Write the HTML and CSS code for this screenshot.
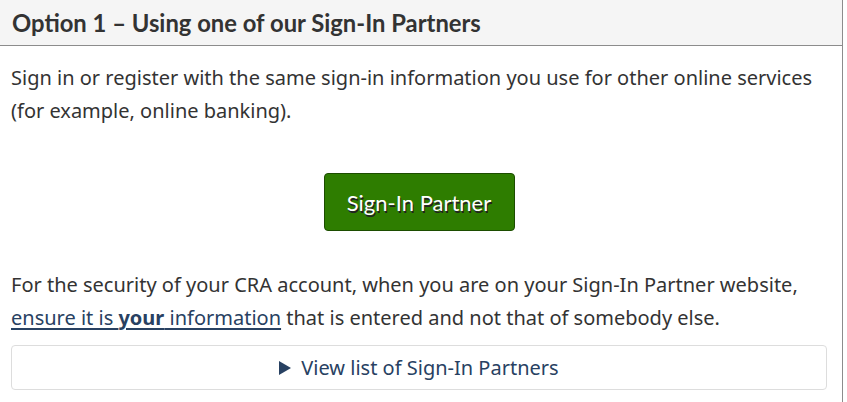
FILE: index.html
```html
<!DOCTYPE html>
<html lang="en">
<head>
<meta charset="utf-8">
<title>Option 1</title>
<link rel="stylesheet" href="styles.css">
</head>
<body>
<section class="panel">
  <header class="panel-heading">
    <h3 class="panel-title">Option 1 – Using one of our Sign-In Partners</h3>
  </header>
  <div class="panel-body">
    <p class="intro">Sign in or register with the same sign-in information you use for other online services (for example, online banking).</p>
    <div class="btn-row">
      <a class="btn-cta" href="#">Sign-In Partner</a>
    </div>
    <p class="note">For the security of your CRA account, when you are on your Sign-In Partner website, <a class="link" href="#">ensure it is <strong>your</strong> information</a> that is entered and not that of somebody else.</p>
    <details class="partners">
      <summary class="partners-summary"><svg class="tri" width="12" height="14" viewBox="0 0 12 14"><path d="M0 0 L12 7 L0 14 Z" fill="#284162"/></svg><span>View list of Sign-In Partners</span></summary>
    </details>
  </div>
</section>
</body>
</html>
```
FILE: styles.css
```css
html, body {
  margin: 0;
  padding: 0;
  background: #fff;
}
body {
  font-family: "Noto Sans", sans-serif;
  font-size: 20px;
  color: #333;
  overflow: hidden;
}
.panel {
  width: 848px;
  margin-left: -5px;
  border: 1px solid #8c8c8c;
  border-top: none;
  box-sizing: border-box;
  min-height: 420px;
}
.panel-heading {
  background: #f5f5f5;
  border-bottom: 1px solid #8c8c8c;
  padding: 10px 16px 10px;
  height: 46px;
  box-sizing: border-box;
}
.panel-title {
  margin: 0;
  font-family: Lato, sans-serif;
  font-weight: 700;
  font-size: 23.8px;
  line-height: 26px;
  color: #333;
}
.panel-body {
  padding: 15px 15px 0 15px;
}
.intro, .note {
  margin: 0;
  line-height: 33px;
}
.btn-row {
  display: flex;
  justify-content: center;
  padding: 46px 0 37px 0;
}
.btn-cta {
  display: flex;
  align-items: center;
  justify-content: center;
  box-sizing: border-box;
  width: 191px;
  height: 58px;
  background: #2e7d00;
  border: 1px solid #1c4d00;
  border-radius: 4px;
  color: #fff;
  font-family: Lato, sans-serif;
  font-size: 22px;
  text-decoration: none;
  text-shadow: 1px 2px 0 #222;
  margin-left: 0;
}
.link {
  color: #284162;
  text-decoration: underline;
  text-underline-offset: 3px;
}
.link strong {
  font-weight: 700;
}
.partners {
  margin-top: 11px;
  border: 1px solid #ddd;
  border-radius: 4px;
}
.partners-summary {
  list-style: none;
  display: flex;
  align-items: center;
  justify-content: center;
  gap: 10px;
  height: 43px;
  color: #284162;
  cursor: pointer;
  padding-left: 0;
}
.partners-summary::-webkit-details-marker {
  display: none;
}
.tri {
  display: block;
  margin-top: 1px;
}
```
